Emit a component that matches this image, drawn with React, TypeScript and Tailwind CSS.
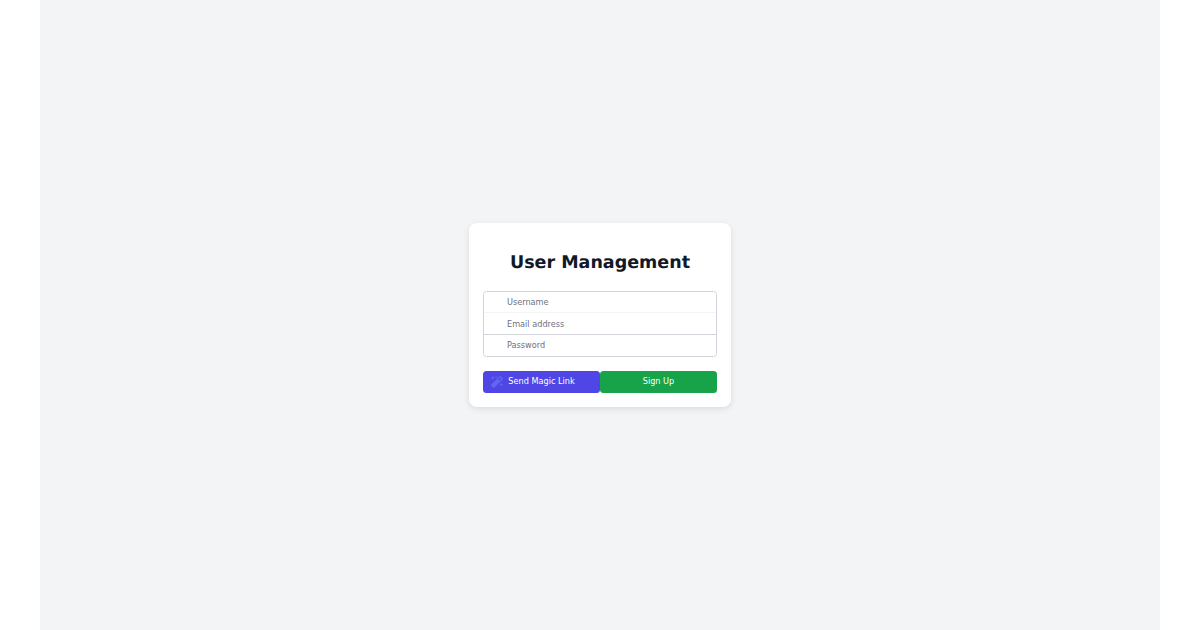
import { FaMagic } from "react-icons/fa"

const fields = [
  { type: "text", placeholder: "Username", border: "border-b border-gray-100" },
  { type: "email", placeholder: "Email address", border: "border-b border-[#d1d5db] pt-[1px]" },
  { type: "password", placeholder: "Password", border: "pb-[1px]" },
]

export default function App() {
  return (
    <div className="min-h-screen bg-white font-['DejaVu_Sans',sans-serif] [text-rendering:geometricPrecision]">
      <div className="mx-auto flex h-[630px] max-w-[1120px] items-center justify-center bg-[#f3f4f6]">
        <div className="w-[262px] rounded-lg bg-white p-3.5 shadow-[0_2px_6px_rgba(0,0,0,0.1)]">
          <h2 className="mt-[15px] mb-[16px] text-center text-[17.5px] leading-[23px] font-bold text-[#111827]">User Management</h2>

          <div className="rounded-[3.5px] border border-[#d1d5db]">
            {fields.map((f) => (
              <input
                key={f.placeholder}
                type={f.type}
                placeholder={f.placeholder}
                className={`block h-[21.33px] w-full bg-transparent pl-[23px] text-[8.17px] text-[#111827] placeholder-[#6b7280] outline-none ${f.border}`}
              />
            ))}
          </div>

          <div className="mt-3.5 flex">
            <button className="relative flex h-[22px] flex-1 items-center justify-center rounded-[3.5px] bg-[#4f46e5] pb-[2px] text-[8.17px] text-white">
              <FaMagic className="absolute top-[5px] left-[8px] size-[12px] text-[#6366f1]" />
              Send Magic Link
            </button>
            <button className="flex h-[22px] flex-1 items-center justify-center rounded-[3.5px] bg-[#16a34a] pb-[2px] text-[8.17px] text-white">
              Sign Up
            </button>
          </div>
        </div>
      </div>
    </div>
  )
}
